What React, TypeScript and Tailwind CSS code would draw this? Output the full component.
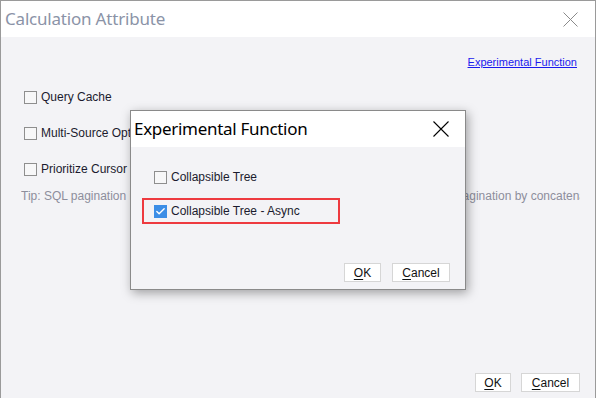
import { Check } from 'lucide-react';

const sans = { fontFamily: '"Liberation Sans", Arial, sans-serif' };
const ui = { fontFamily: '"Noto Sans", "Open Sans", sans-serif' };

function CloseIcon({ size, color, stroke }: { size: number; color: string; stroke: number }) {
  return (
    <svg width={size} height={size} viewBox={`0 0 ${size} ${size}`} fill="none">
      <path d={`M0.5 0.5L${size - 0.5} ${size - 0.5}M${size - 0.5} 0.5L0.5 ${size - 0.5}`} stroke={color} strokeWidth={stroke} />
    </svg>
  );
}

function Box({ checked = false }: { checked?: boolean }) {
  if (checked) {
    return (
      <span className="w-[13px] h-[13px] bg-[#3c8ee6] flex items-center justify-center shrink-0">
        <Check className="w-[11px] h-[11px] text-white" strokeWidth={3} />
      </span>
    );
  }
  return <span className="w-[13px] h-[13px] border border-[#8e8e8e] bg-[#f7f7f8] shrink-0" />;
}

function Btn({ label, w }: { label: string; w: string }) {
  return (
    <button
      className={`${w} h-[19px] bg-white border border-[#d6d6d6] text-[12px] text-[#111] leading-none flex items-center justify-center`}
      style={sans}
    >
      <span className="underline underline-offset-2">{label[0]}</span>
      {label.slice(1)}
    </button>
  );
}

function Option({ label, checked }: { label: string; checked?: boolean }) {
  return (
    <label className="flex items-center gap-[4px] h-[16px] text-[12px] text-[#1b1b2e] whitespace-nowrap" style={sans}>
      <Box checked={checked} />
      {label}
    </label>
  );
}

export default function App() {
  return (
    <div className="w-[596px] h-[398px] flex flex-col border-t border-l border-r border-[#9a9a9a] overflow-hidden">
      <div className="h-[36px] bg-white flex items-center justify-between pl-[4px] pr-[17px] shrink-0">
        <span className="text-[17px] tracking-[-0.2px] text-[#8b93a7]" style={ui}>Calculation Attribute</span>
        <CloseIcon size={15} color="#8a8a8a" stroke={1} />
      </div>

      <div className="flex-1 bg-[#f3f3f6] relative flex flex-col">
        <div className="flex justify-end pr-[18px] mt-[18px]">
          <a className="text-[11px] leading-[14px] text-[#1a1aee] underline" style={sans}>Experimental Function</a>
        </div>

        <div className="flex flex-col gap-[20px] pl-[23px] mt-[20px]">
          <Option label="Query Cache" />
          <Option label="Multi-Source Optimization" />
          <Option label="Prioritize Cursor Pagination" />
        </div>

        <p className="mt-[11px] ml-[20px] mr-[15px] text-[12px] leading-[16px] text-[#8d8e9c] whitespace-nowrap overflow-hidden" style={sans}>
          Tip: SQL pagination is applied by default. Enable cursor mode to replace the SQL pagination by concatenating
        </p>

        <div className="mt-auto flex justify-end gap-[10px] pr-[15px] pb-[6px]">
          <Btn label="OK" w="w-[36px]" />
          <Btn label="Cancel" w="w-[59px]" />
        </div>

        <div className="absolute left-[129px] top-[73px] w-[336px] h-[180px] border border-[#8a8a8a] bg-[#f3f3f6] flex flex-col shadow-[2px_3px_10px_rgba(0,0,0,0.35)]">
          <div className="h-[36px] bg-white flex items-center justify-between pl-[3px] pr-[16px] shrink-0">
            <span className="text-[17px] tracking-[-0.3px] text-black" style={ui}>Experimental Function</span>
            <CloseIcon size={16} color="#000000" stroke={1.1} />
          </div>
          <div className="flex flex-col pl-[23px] mt-[22px]">
            <Option label="Collapsible Tree" />
          </div>
          <div className="ml-[11px] mt-[13px] w-[198px] h-[26px] border-2 border-[#ee3a3f] flex items-center pl-[10px]">
            <Option label="Collapsible Tree - Async" checked />
          </div>
          <div className="mt-auto flex justify-end gap-[11px] pr-[15px] pb-[7px]">
            <Btn label="OK" w="w-[37px]" />
            <Btn label="Cancel" w="w-[58px]" />
          </div>
        </div>
      </div>
    </div>
  );
}
